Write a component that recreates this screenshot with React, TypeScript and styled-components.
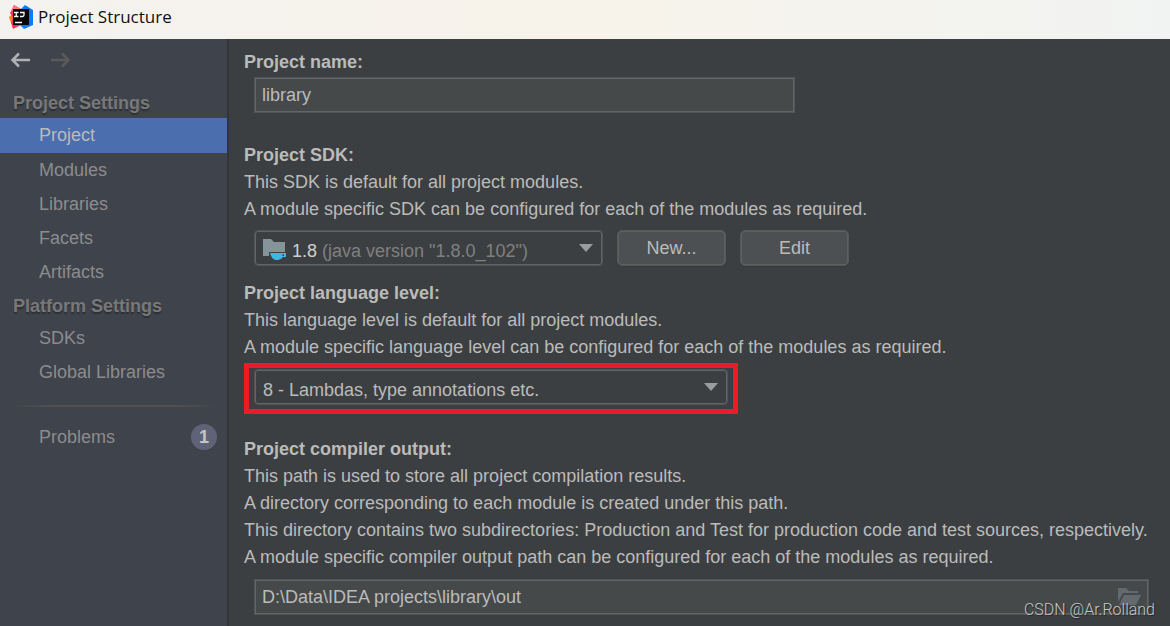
import React from 'react';
import styled, { createGlobalStyle, css } from 'styled-components';

const GlobalStyle = createGlobalStyle`
  *, *::before, *::after { box-sizing: border-box; }
  body {
    margin: 0;
    background: #3c3f41;
    color: #bbbbbb;
    font-family: 'Liberation Sans', Arial, sans-serif;
    font-size: 18px;
  }
  h2, p { margin: 0; }
  button, input, select { font: inherit; color: inherit; }
`;

const Window = styled.div`
  display: flex;
  flex-direction: column;
  min-height: 100vh;
`;

const TitleBar = styled.header`
  display: flex;
  align-items: center;
  gap: 5px;
  height: 39px;
  padding: 0 9px 6px;
  background: linear-gradient(90deg, #f4f2ef, #f7f3ea 50%, #f1f3f2);
  color: #111111;
  font-family: 'Open Sans', 'Noto Sans', sans-serif;
  font-size: 17px;
`;

const Body = styled.div`
  display: flex;
  flex: 1;
`;

const Sidebar = styled.nav`
  flex: 0 0 229px;
  border-right: 2px solid #343536;
  background: #3f434c;
  color: #8c8c8c;
`;

const History = styled.div`
  display: flex;
  gap: 20px;
  height: 47px;
  padding: 11px 10px 0;
`;

const HistoryButton = styled.button`
  display: flex;
  width: 20px;
  height: 20px;
  padding: 0;
  border: 0;
  background: none;
  color: #afb1b3;
  &:disabled { color: #5a5a5a; }
`;

const GroupTitle = styled.h2`
  height: 32px;
  padding: 2px 13px 0;
  color: #787878;
  font-size: 18px;
  line-height: 31px;
  text-shadow: 0 2px 1px #2d3036;
`;

const NavItem = styled.a<{ $active?: boolean }>`
  display: flex;
  align-items: center;
  justify-content: space-between;
  height: 34px;
  padding: 0 10px 0 39px;
  color: inherit;
  text-decoration: none;
  ${(p) => p.$active && css`
    height: 35px;
    background: #4b6eaf;
    color: #bbbbbb;
  `}
`;

const Divider = styled.hr`
  height: 2px;
  margin: 16px 10px 13px;
  border: 0;
  background: linear-gradient(90deg, transparent, #515151 20%, #515151 80%, transparent);
`;

const Badge = styled.span`
  display: grid;
  place-items: center;
  width: 26px;
  height: 26px;
  border-radius: 50%;
  background: #5f6377;
  color: #c4c4c4;
  font-weight: bold;
`;

const Main = styled.main`
  flex: 1;
  min-width: 0;
  padding: 10px 15px 11px;
  line-height: 27px;
`;

const Section = styled.section<{ $gap: number }>`
  margin-bottom: ${(p) => p.$gap}px;
`;

const Label = styled.label`
  display: block;
  font-weight: bold;
`;

const Hint = styled.p`
  white-space: nowrap;
`;

const Controls = styled.div<{ $top: number }>`
  display: flex;
  gap: 14px;
  margin: ${(p) => p.$top}px 6px 0 10px;
`;

const Field = styled.div<{ $width?: number }>`
  display: flex;
  align-items: center;
  flex: ${(p) => (p.$width ? `0 1 ${p.$width}px` : '1')};
  height: 36px;
  padding: 0 7px 0 1px;
  border: 1px solid #525556;
  box-shadow: inset 0 0 0 1px #626465;
  background: #45494a;
`;

const TextInput = styled.input`
  flex: 1;
  min-width: 0;
  height: 32px;
  padding: 0 6px;
  border: 0;
  outline: 0;
  background: none;
`;

const IconButton = styled.button`
  display: flex;
  padding: 0;
  border: 0;
  background: none;
`;

const Combo = styled.div<{ $width: number }>`
  display: flex;
  align-items: center;
  width: ${(p) => p.$width}px;
  height: 36px;
  padding: 4px 9px 0 8px;
  border: 1px solid #515455;
  border-radius: 4px;
  box-shadow: inset 0 0 0 1px #626465;
`;

const ComboValue = styled.label`
  padding-top: 2px;
  margin: 0 5px 0 6px;
  color: #cfcfcf;
`;

const Select = styled.select<{ $muted?: boolean }>`
  appearance: none;
  flex: 1;
  min-width: 0;
  height: 30px;
  padding: 2px 0 0;
  border: 0;
  outline: 0;
  background: none;
  color: ${(p) => (p.$muted ? '#808080' : '#bbbbbb')};
`;

const Arrow = styled.svg`
  flex: none;
  width: 14px;
  height: 12px;
  padding-bottom: 4px;
  fill: #9a9da0;
`;

const Button = styled.button`
  width: 109px;
  height: 36px;
  padding: 0;
  border: 1px solid #565959;
  border-radius: 5px;
  background: #4c5052;
  box-shadow: inset 0 0 0 1px #5e6060, 0 1px 1px #36393a;
`;

const Highlight = styled.div`
  width: 494px;
  max-width: 100%;
  margin-top: 2px;
  padding: 1px 5px 4px;
  border: 5px solid #ed1c24;
`;

const Watermark = styled.div`
  position: absolute;
  right: 15px;
  bottom: 6px;
  color: #c6c7c8;
  font-family: Roboto, sans-serif;
  font-size: 16px;
  font-weight: 300;
  line-height: 20px;
  text-shadow: 1px 1px 1px #222222;
  pointer-events: none;
`;

function ComboArrow() {
  return <Arrow viewBox="0 0 14 8" aria-hidden="true"><path d="M0 0h14L7 8z" /></Arrow>;
}

function AppLogo() {
  return (
    <svg width="24" height="24" viewBox="0 0 24 24" aria-hidden="true">
      <path d="M0 12l4-3v10l-2-1z" fill="#fc801d" />
      <path d="M5 0l7 4v16l-8 4-2-6 2-5-3-5z" fill="#fe315d" />
      <path d="M5 0l7 4H5l-4 5z" fill="#f97a7a" />
      <path d="M16 0l8 5v15l-9 4-4-4 1-16z" fill="#087cfa" />
      <path d="M4 4h16v16H4z" fill="#080808" />
      <path d="M6 17.500h7M5 7.500h4.500M7.250 7.500v4.500M5 11.500h4.500M11 7.500h4v2.500q0 1.500-1.500 1.500h-2.500" fill="none" stroke="#fff" strokeWidth="1.300" />
    </svg>
  );
}

const projectItems = ['Project', 'Modules', 'Libraries', 'Facets', 'Artifacts'];
const platformItems = ['SDKs', 'Global Libraries'];

export default function App() {
  return (
    <>
      <GlobalStyle />
      <Window>
        <TitleBar><AppLogo />Project Structure</TitleBar>
        <Body>
          <Sidebar>
            <History>
              <HistoryButton aria-label="Back">
                <svg width="20" height="20" viewBox="0 0 20 20" fill="none" stroke="currentColor" strokeWidth="2.500"><path d="M20 10H2.500M9 3.500L2.500 10 9 16.500" /></svg>
              </HistoryButton>
              <HistoryButton aria-label="Forward" disabled>
                <svg width="20" height="20" viewBox="0 0 20 20" fill="none" stroke="currentColor" strokeWidth="2.500"><path d="M1 10h17.500M12 3.500l6.500 6.500-6.500 6.500" /></svg>
              </HistoryButton>
            </History>
            <GroupTitle>Project Settings</GroupTitle>
            {projectItems.map((item) => (
              <NavItem key={item} href="#" $active={item === 'Project'}>{item}</NavItem>
            ))}
            <GroupTitle>Platform Settings</GroupTitle>
            {platformItems.map((item) => <NavItem key={item} href="#">{item}</NavItem>)}
            <Divider />
            <NavItem href="#">Problems<Badge>1</Badge></NavItem>
          </Sidebar>
          <Main>
            <Section $gap={29}>
              <Label htmlFor="name">Project name:</Label>
              <Controls $top={1}>
                <Field $width={541}><TextInput id="name" defaultValue="library" /></Field>
              </Controls>
            </Section>
            <Section $gap={14}>
              <Label htmlFor="sdk">Project SDK:</Label>
              <Hint>This SDK is default for all project modules.</Hint>
              <Hint>A module specific SDK can be configured for each of the modules as required.</Hint>
              <Controls $top={7}>
                <Combo $width={349}>
                  <svg width="23" height="22" viewBox="0 0 23 22" aria-hidden="true">
                    <path d="M0 0h8l3 3h11v10H6v4H0z" fill="#87939a" />
                    <path d="M7 14h16v4h-3q-2 3-5 3h-3q-4-2-5-7z" fill="#40b6e0" />
                    <path d="M19.500 15.500H21V17h-1.500z" fill="#3c3f41" />
                  </svg>
                  <ComboValue htmlFor="sdk">1.8</ComboValue>
                  <Select id="sdk" $muted><option>(java version "1.8.0_102")</option></Select>
                  <ComboArrow />
                </Combo>
                <Button>New...</Button>
                <Button>Edit</Button>
              </Controls>
            </Section>
            <Section $gap={22}>
              <Label htmlFor="level">Project language level:</Label>
              <Hint>This language level is default for all project modules.</Hint>
              <Hint>A module specific language level can be configured for each of the modules as required.</Hint>
              <Highlight>
                <Combo $width={474}>
                  <Select id="level"><option>8 - Lambdas, type annotations etc.</option></Select>
                  <ComboArrow />
                </Combo>
              </Highlight>
            </Section>
            <Section $gap={0}>
              <Label htmlFor="output">Project compiler output:</Label>
              <Hint>This path is used to store all project compilation results.</Hint>
              <Hint>A directory corresponding to each module is created under this path.</Hint>
              <Hint>This directory contains two subdirectories: Production and Test for production code and test sources, respectively.</Hint>
              <Hint>A module specific compiler output path can be configured for each of the modules as required.</Hint>
              <Controls $top={8}>
                <Field>
                  <TextInput id="output" defaultValue="D:\Data\IDEA projects\library\out" />
                  <IconButton aria-label="Browse">
                    <svg width="23" height="18" viewBox="0 0 23 18" fill="#626a6e" aria-hidden="true">
                      <path d="M0 0h8l3 3h9v2H5L0 14z" />
                      <path d="M6 7h17l-5 10H1z" />
                    </svg>
                  </IconButton>
                </Field>
              </Controls>
            </Section>
          </Main>
        </Body>
      </Window>
      <Watermark>CSDN @Ar.Rolland</Watermark>
    </>
  );
}
